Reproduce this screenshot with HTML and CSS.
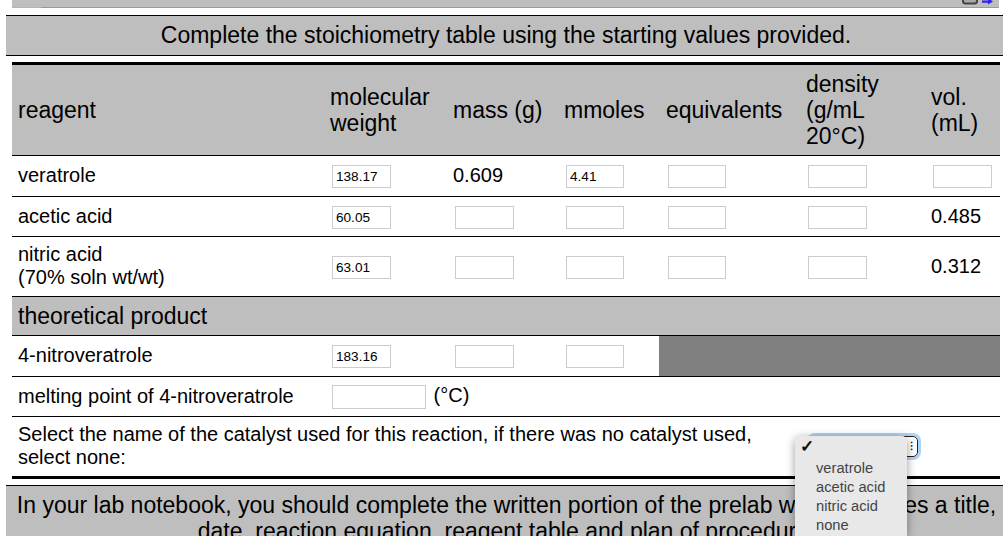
FILE: index.html
```html
<!DOCTYPE html>
<html lang="en">
<head>
<meta charset="utf-8">
<title>Stoichiometry table</title>
<link rel="stylesheet" href="styles.css">
</head>
<body>
<div class="topbar">
  <div class="tab"></div>
  <div class="tools">
    <svg class="tool-icon" width="32" height="7" viewBox="0 0 32 7"><rect x="2" y="-6" width="14" height="9.5" rx="2.5" fill="#a8a8a8" stroke="#444" stroke-width="2"/><path d="M21 .5h6V-2l5 3.5-5 3V2.8h-6z" fill="#3322ee"/></svg>
  </div>
</div>
<div class="banner">Complete the stoichiometry table using the starting values provided.</div>
<table class="stoich">
  <colgroup>
    <col class="c1"><col class="c2"><col class="c3"><col class="c4"><col class="c5"><col class="c6"><col class="c7">
  </colgroup>
  <tr class="head">
    <th>reagent</th>
    <th>molecular<br>weight</th>
    <th>mass (g)</th>
    <th>mmoles</th>
    <th>equivalents</th>
    <th>density<br>(g/mL<br>20°C)</th>
    <th>vol.<br>(mL)</th>
  </tr>
  <tr class="r40 tall">
    <td class="lift">veratrole</td>
    <td><input class="box" value="138.17"></td>
    <td class="lift">0.609</td>
    <td><input class="box narrow" value="4.41"></td>
    <td><input class="box narrow"></td>
    <td><input class="box"></td>
    <td><input class="box"></td>
  </tr>
  <tr class="r40">
    <td>acetic acid</td>
    <td><input class="box" value="60.05"></td>
    <td><input class="box"></td>
    <td><input class="box narrow"></td>
    <td><input class="box narrow"></td>
    <td><input class="box"></td>
    <td>0.485</td>
  </tr>
  <tr class="r60">
    <td class="lift">nitric acid<br>(70% soln wt/wt)</td>
    <td><input class="box" value="63.01"></td>
    <td><input class="box"></td>
    <td><input class="box narrow"></td>
    <td><input class="box narrow"></td>
    <td><input class="box"></td>
    <td>0.312</td>
  </tr>
  <tr class="sub">
    <td colspan="7">theoretical product</td>
  </tr>
  <tr class="r40 tall">
    <td class="lift">4-nitroveratrole</td>
    <td><input class="box" value="183.16"></td>
    <td><input class="box"></td>
    <td><input class="box narrow"></td>
    <td class="blocked" colspan="3"></td>
  </tr>
  <tr class="r40">
    <td>melting point of 4-nitroveratrole</td>
    <td colspan="6"><input class="box wide"> <span>(°C)</span></td>
  </tr>
  <tr class="r60 last">
    <td class="lift" colspan="5">Select the name of the catalyst used for this reaction, if there was no catalyst used, select none:</td>
    <td colspan="2" class="select-cell"><div class="select-focus"><span>⁝</span></div>
      <div class="popup">
        <div class="opt checked">✓</div>
        <div class="opt">veratrole</div>
        <div class="opt">acetic acid</div>
        <div class="opt">nitric acid</div>
        <div class="opt">none</div>
      </div>
    </td>
  </tr>
</table>
<div class="note">In your lab notebook, you should complete the written portion of the prelab which includes a title, date, reaction equation, reagent table and plan of procedure.</div>
</body>
</html>
```
FILE: styles.css
```css
html, body {
  margin: 0;
  padding: 0;
  height: 536px;
  overflow: hidden;
  background: #fff;
  font-family: "Liberation Sans", Arial, sans-serif;
  color: #000;
}
.topbar {
  height: 8px;
  margin: 0 4px 0 12px;
  background: #bebebe;
  display: flex;
}
.tab {
  box-sizing: border-box;
  width: 29px;
  height: 8px;
  border-bottom: 1px solid #b4b4b4;
}
.tools {
  box-sizing: border-box;
  flex: 1;
  height: 8px;
  border-bottom: 1px solid #999;
  display: flex;
  justify-content: flex-end;
  padding-right: 6px;
}
.tool-icon { display: block; }
.banner {
  margin: 7px 0 0 6px;
  height: 39px;
  line-height: 39px;
  padding-left: 3px;
  border-top: 1px solid #000;
  border-bottom: 1px solid #000;
  background: #bebebe;
  text-align: center;
  font-size: 23px;
}
.stoich {
  margin: 6px 0 0 12px;
  width: 988px;
  table-layout: fixed;
  border-collapse: collapse;
  border-top: 3px solid #000;
  border-bottom: 3px solid #000;
  font-size: 20px;
}
.c1 { width: 312px; }
.c2 { width: 123px; }
.c3 { width: 111px; }
.c4 { width: 102px; }
.c5 { width: 140px; }
.c6 { width: 125px; }
.c7 { width: 75px; }
th, td {
  padding: 0 6px;
  text-align: left;
  font-weight: normal;
  border-bottom: 1px solid #000;
  vertical-align: middle;
  line-height: 23px;
}
.head th {
  height: 90px;
  background: #bebebe;
  font-size: 23px;
  line-height: 26px;
}
.r40 td { height: 39px; }
.tall td { height: 40px; }
.r60 td { height: 59px; }
.tall .lift { height: 38px; padding-bottom: 2px; }
.r60 .lift { height: 57px; padding-bottom: 2px; }
.sub td {
  height: 38px;
  background: #bebebe;
  font-size: 23px;
}
.last td { border-bottom: 0; }
.blocked {
  background: #808080;
  box-shadow: -1px 0 0 #808080;
}
.box {
  box-sizing: border-box;
  width: 59px;
  height: 23px;
  margin: 0 2px;
  padding: 1px 3px;
  border: 1px solid #ccc;
  background: #fff;
  font: 13.6px "Liberation Sans", Arial, sans-serif;
  color: #000;
  vertical-align: middle;
}
.narrow { width: 58px; }
.wide { width: 94px; height: 24px; }
.select-cell { position: relative; }
.select-focus {
  box-sizing: border-box;
  width: 108px;
  height: 21px;
  margin-left: 4px;
  border: 1px solid #222;
  border-radius: 5px;
  box-shadow: 0 0 0 3px #add4f7;
  text-align: right;
  font-size: 12px;
  line-height: 19px;
  padding-right: 4px;
}
.popup {
  position: absolute;
  left: -5px;
  top: 19px;
  width: 112px;
  height: 99px;
  padding-top: 1px;
  background: #e8e8e8;
  border-radius: 5px 5px 0 0;
  box-shadow: 0 2px 10px rgba(0,0,0,.4);
  z-index: 2;
}
.opt {
  height: 19px;
  line-height: 19px;
  padding-left: 21px;
  font-size: 14.7px;
  color: #444;
}
.checked {
  padding-left: 5px;
  margin-bottom: 3px;
  font-size: 17px;
  font-weight: bold;
  color: #111;
}
.note {
  margin: 6px 0 0 6px;
  border-top: 1px solid #000;
  background: #bebebe;
  text-align: center;
  font-size: 23px;
  line-height: 26px;
  padding: 6px 4px 0 8px;
  height: 44px;
  overflow: hidden;
}
```
